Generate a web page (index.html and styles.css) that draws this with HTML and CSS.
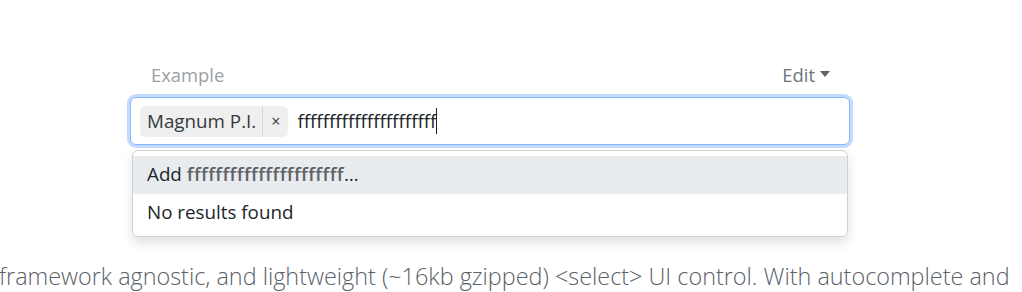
FILE: index.html
```html
<!DOCTYPE html>
<html>
<head>
<meta charset="utf-8">
<link rel="stylesheet" href="styles.css">
</head>
<body>
<div class="page">
  <div class="demo">
    <div class="label-row">
      <span class="label">Example</span>
      <span class="edit">Edit <span class="caret"></span></span>
    </div>
    <div class="control">
      <div class="chip"><span class="chip-text">Magnum P.I.</span><span class="chip-x">×</span></div>
      <span class="input-text">ffffffffffffffffffffff</span><span class="cursor"></span>
    </div>
    <div class="dropdown">
      <div class="opt active">Add <strong>ffffffffffffffffffffff</strong>…</div>
      <div class="opt">No results found</div>
    </div>
  </div>
  <p class="lead">framework agnostic, and lightweight (~16kb gzipped) &lt;select&gt; UI control. With autocomplete and</p>
</div>
</body>
</html>
```
FILE: styles.css
```css
* { box-sizing: border-box; }
html, body { margin: 0; padding: 0; background: #fff; }
body { font-family: "Open Sans", "Noto Sans", sans-serif; color: #212529; overflow: hidden; width: 1022px; height: 292px; }
.page { padding-top: 62px; }
.demo { width: 720px; margin-left: 130px; position: relative; }
.label-row { display: flex; justify-content: space-between; align-items: center; padding: 0 20px 0 21px; height: 24px; font-size: 18.4px; }
.label { color: #9aa0a6; }
.edit { color: #6c757d; display: flex; align-items: center; gap: 5px; }
.caret { width: 0; height: 0; border-left: 5.5px solid transparent; border-right: 5.5px solid transparent; border-top: 6px solid #5f6368; }
.control { margin-top: 11px; height: 48px; border: 1px solid #86b7fe; border-radius: 6px; box-shadow: 0 0 0 3px #c2dbfe; display: flex; align-items: center; padding: 0 9px; font-size: 18.8px; }
.chip { display: flex; align-items: center; height: 31px; background: #efefef; border-radius: 5px; color: #343a40; }
.chip-text { padding: 0 6px 0 7px; line-height: 31px; border-right: 1px solid #d9d9d9; }
.chip-x { padding: 0 8px 0 8px; font-size: 16px; color: #343a40; }
.input-text { margin-left: 9px; letter-spacing: 0; color: #212529; }
.cursor { width: 1px; height: 26px; background: #212529; }
.dropdown { margin-top: 5px; margin-left: 2px; width: 716px; border: 1px solid #d0d0d0; border-radius: 6px; box-shadow: 0 6px 12px rgba(0,0,0,0.12); padding: 5px 0; font-size: 18.8px; }
.opt { height: 37.5px; line-height: 37.5px; padding-left: 14px; color: #212529; }
.opt.active { background: #e9ecef; }
.opt strong { font-weight: 600; color: #5f6368; letter-spacing: 0.35px; }
.lead { margin: 23px 0 0 -1px; white-space: nowrap; font-size: 23.4px; font-weight: 300; color: #5a6168; }
```
